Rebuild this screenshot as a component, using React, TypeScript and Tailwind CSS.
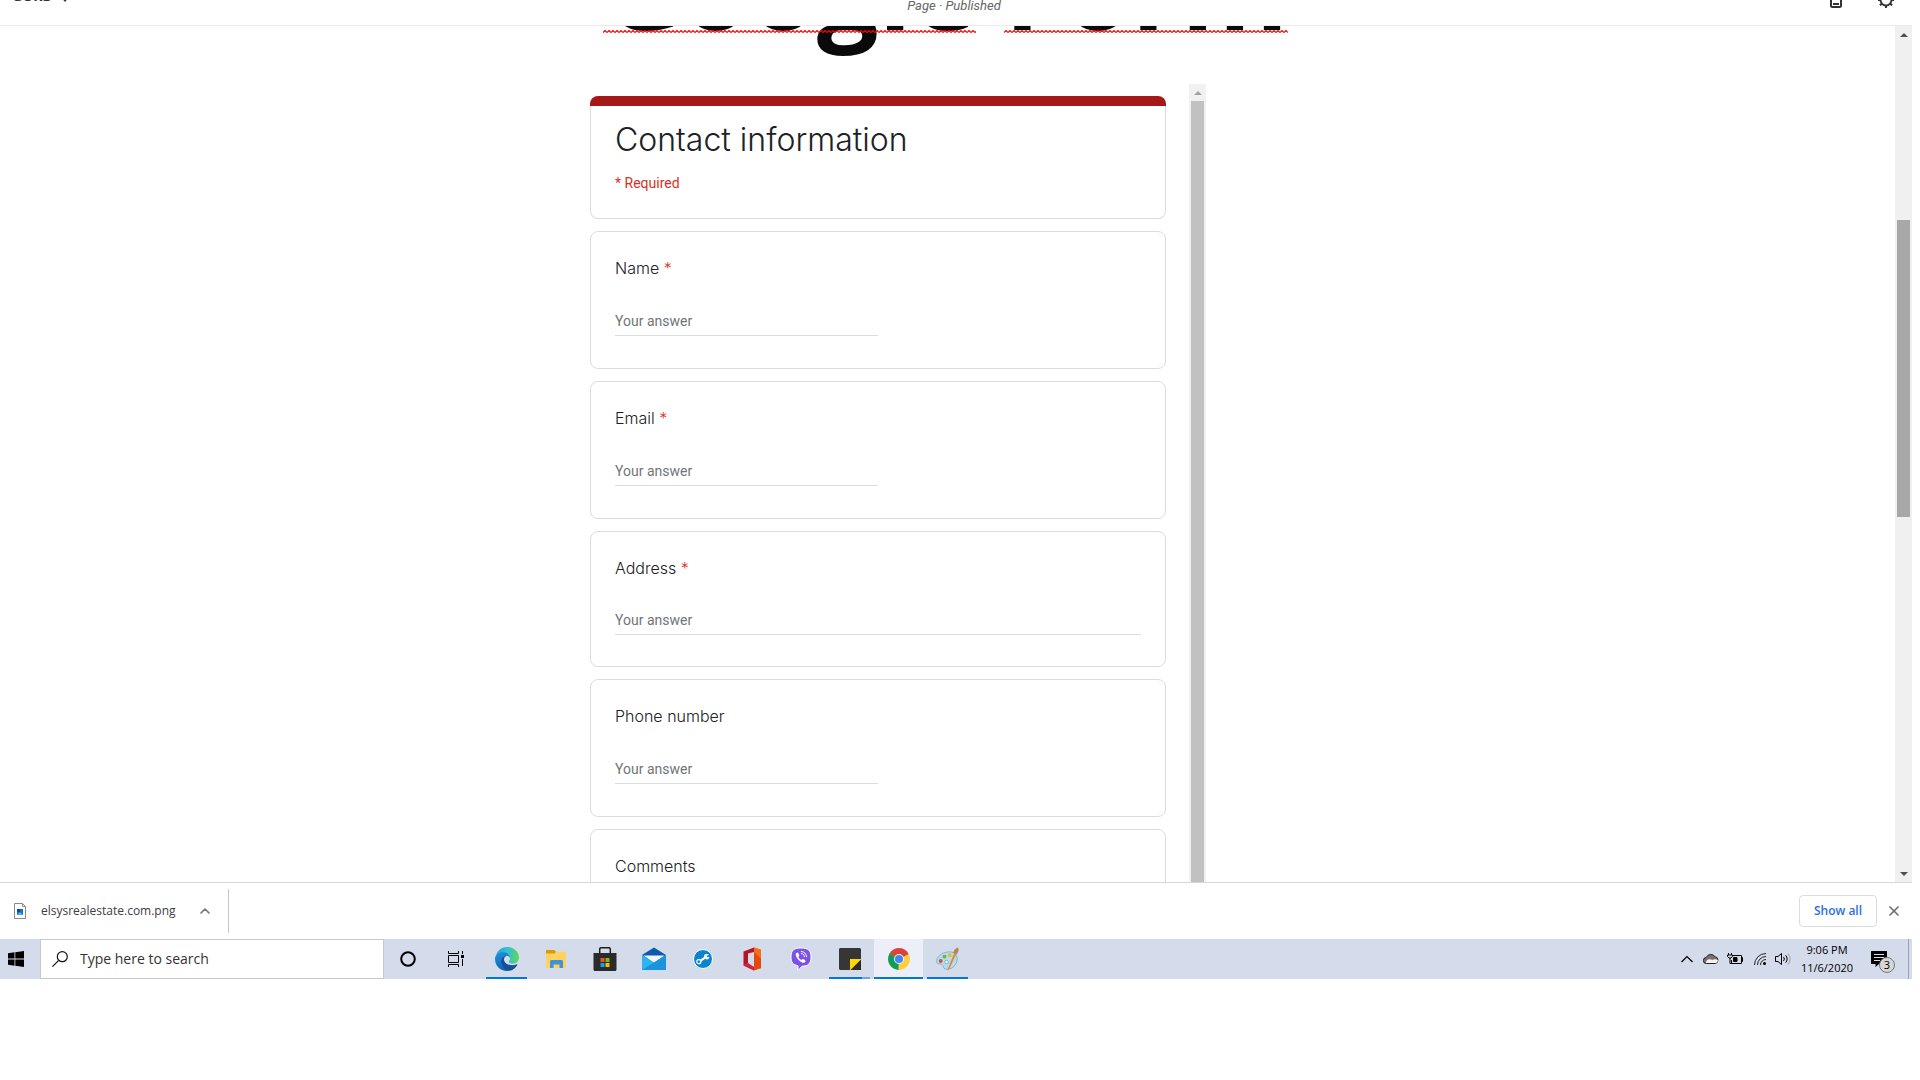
import type { ReactNode } from "react";
import { ChevronUp, X } from "lucide-react";

const questions = [
    { id: "name", label: "Name", required: true },
    { id: "email", label: "Email", required: true },
    { id: "address", label: "Address", required: true, long: true },
    { id: "phone", label: "Phone number" },
    { id: "comments", label: "Comments", long: true },
];

function EdgeIcon() {
    return (
        <svg viewBox="0 0 24 24" className="h-6 w-6">
            <defs>
                <linearGradient id="edgeTop" x1="0" y1="0.4" x2="1" y2="0.4">
                    <stop offset="0" stopColor="#2a9fe0" />
                    <stop offset="0.5" stopColor="#2fc0d8" />
                    <stop offset="1" stopColor="#62d84e" />
                </linearGradient>
                <linearGradient id="edgeLeft" x1="0" y1="0" x2="0.4" y2="1">
                    <stop offset="0" stopColor="#2394dc" />
                    <stop offset="1" stopColor="#0f63b4" />
                </linearGradient>
            </defs>
            <path d="M1 8.500C2.500 3.300 7 0 12 0c7 0 12 5 12 10.600 0 3.800-2.800 6.100-6 6.100-2.700 0-4.200-1-4.200-2 0-.8 1.200-1.200 1.200-3.200C15 8.800 12 6.500 8.500 6.500 5 6.500 2 7.500 1 8.500z" fill="url(#edgeTop)" />
            <path d="M0 12c0-4 3.500-6.700 8-6.700 4.200 0 7 2.700 7 6 0-1.500-1.700-2.600-3.300-2.600C8.500 8.700 6.200 12 6.200 15c0 5 4 8.500 8.200 8.700-.8.200-1.600.3-2.400.3C5.200 24 0 18.600 0 12z" fill="url(#edgeLeft)" />
            <path d="M11.500 8.800C8.200 8.800 6 11.900 6 15.200 6 20 10 23.800 14.300 23.800c3.700-.6 6.500-3 8-5.900.3-.6-.1-.9-.6-.6-1.300.6-2.600.9-4 .9-5 0-8.700-2.600-8.700-5.800 0-1.500 1-2.900 2.500-3.600z" fill="#124f9c" />
        </svg>
    );
}

function ExplorerIcon() {
    return (
        <svg viewBox="0 0 22 20" className="h-5 w-[22px]">
            <path d="M1 1h8.500l1.500 2H21v4H1z" fill="#d99a0b" />
            <path d="M1 4.500h8.500l1.500-1.700h10V19H1z" fill="#ffd25e" />
            <path d="M5 19v-6.500c0-.9.600-1.500 1.500-1.500h10c.9 0 1.500.6 1.500 1.500V19h-3.500v-3.500h-6V19z" fill="#3f93d6" />
        </svg>
    );
}

function StoreIcon() {
    return (
        <svg viewBox="0 0 24 24" className="h-6 w-6">
            <path d="M6.700 7V2.200c0-.9.600-1.500 1.500-1.500h7.600c.9 0 1.500.6 1.500 1.500V7" fill="none" stroke="#1e1e1e" strokeWidth="1.500" />
            <path d="M.5 6h23v16.500c0 .900-.6 1.500-1.500 1.500H2c-.9 0-1.500-.6-1.500-1.500z" fill="#2b2b2b" />
            <path d="M7.500 11h4v4h-4z" fill="#f25022" />
            <path d="M12.500 11h4v4h-4z" fill="#7fba00" />
            <path d="M7.500 16h4v4h-4z" fill="#00a4ef" />
            <path d="M12.500 16h4v4h-4z" fill="#ffb900" />
        </svg>
    );
}

function MailIcon() {
    return (
        <svg viewBox="0 0 24 24" className="h-6 w-6">
            <path d="M0 8 12 .5 24 8l-6 6H6z" fill="#0b5cad" />
            <path d="M1.500 8.500h21L12 16z" fill="#f4f6fa" />
            <path d="M0 8v15h24V8l-12 7.500z" fill="#2cb5f0" />
            <path d="M0 23 24 8v15z" fill="#1c93dd" />
        </svg>
    );
}

function WrenchIcon() {
    return (
        <svg viewBox="0 0 20 20" className="h-5 w-5">
            <circle cx="10" cy="10" r="9.500" fill="#0a84cc" stroke="#fff" />
            <path d="M6.200 12.700 13.500 7.600" stroke="#fff" strokeWidth="2.200" />
            <path d="M16 5.700l-2.300 1.200.2 1.300 2.500-.4a2.700 2.700 0 1 1-3-2.800c1-.2 2 0 2.600.7z" fill="#fff" />
            <circle cx="5.800" cy="12.700" r="2" fill="#0a84cc" stroke="#fff" strokeWidth="1.200" />
        </svg>
    );
}

function OfficeIcon() {
    return (
        <svg viewBox="0 0 20 24" className="h-6 w-5">
            <path d="M12 .5 1.500 4.500v14l4.500-2.300V6.500L12 5z" fill="#b5152a" />
            <path d="M12 .5 19 2.700v18.600l-7 2.200z" fill="#e6480c" />
            <path d="M12 .5 19 2.700v9l-7-6.700z" fill="#f27112" />
            <path d="M1.500 18.500 12 23.500V20z" fill="#e2455c" />
            <path d="M1.500 18.500 6 16l6 4v3.500z" fill="#c9243a" />
        </svg>
    );
}

function ViberIcon() {
    return (
        <svg viewBox="0 0 24 24" className="h-6 w-6">
            <path d="M12 1c7 0 10 2.200 10 9s-3 9.200-9 9.200L9 23.500v-4.800C4 17.800 2 15.500 2 10c0-6.800 3-9 10-9z" fill="#7d52ea" stroke="#fff" />
            <path d="M8.400 5.500c-1.400.5-2 1.500-1.600 2.800 1.100 3.500 3.500 6 6.800 7.400 1.300.5 2.500-.3 2.900-1.500.2-.7-1.800-2.200-2.600-2.200-.6 0-.9 1-1.500.8-1.300-.5-2.400-1.600-2.900-2.900-.2-.6.800-.9.800-1.500 0-.7-1.200-3-1.900-2.900z" fill="#fff" />
            <path d="M12.300 4.500c3 .1 5 2 5.200 5.200M12.500 6.600c1.700.1 2.800 1.200 2.900 3" fill="none" stroke="#fff" strokeLinecap="round" />
        </svg>
    );
}

function StickyNotesIcon() {
    return (
        <svg viewBox="0 0 22 22" className="h-[22px] w-[22px]">
            <path d="M1 0h20l1 1v10L11 22H1l-1-1V1z" fill="#363636" />
            <path d="M11 11h11v.5L11.500 22H11z" fill="#ffd800" />
            <path d="M22 11.500V22H11.500z" fill="#2d2a20" />
        </svg>
    );
}

function ChromeIcon() {
    return (
        <svg viewBox="0 0 24 24" className="h-6 w-6">
            <path d="M12 12 2.500 6.500a11 11 0 0 1 19 0z" fill="#db4437" />
            <path d="M12 12 12 23A11 11 0 0 1 2.500 6.500z" fill="#109d58" />
            <path d="M12 12l9.500-5.500A11 11 0 0 1 12 23z" fill="#ffcd40" />
            <path d="M12 7h9.800L12 12z" fill="#db4437" />
            <path d="M7.700 14.500 2.500 6.500 12 12z" fill="#109d58" />
            <path d="M16.300 14.500 11.300 23 12 12z" fill="#ffcd40" />
            <circle cx="12" cy="12" r="5" fill="#f1f1f1" />
            <circle cx="12" cy="12" r="4" fill="#4285f4" />
        </svg>
    );
}

function PaintIcon() {
    return (
        <svg viewBox="0 0 24 24" className="h-6 w-6">
            <path d="M11.500 5C18 4 22 8 21 13.500S15 23 9.500 22c-3-.6-1.500-3.200-3.500-4.500S1 18 .7 15C.2 10 5.500 5.800 11.500 5z" fill="#b5ddf0" stroke="#6fa9c9" strokeWidth="0.800" />
            <circle cx="4.700" cy="14" r="1.900" fill="#dd4b39" />
            <circle cx="8.500" cy="9.700" r="1.900" fill="#74b72e" />
            <circle cx="13.700" cy="8.200" r="1.900" fill="#f2b90f" />
            <circle cx="10.500" cy="15" r="1.800" fill="#eef6fa" stroke="#6fa9c9" strokeWidth="0.800" />
            <path d="M20 7.500 13 22.500l-1.300.8.100-1.500L18 6.500z" fill="#e08a2a" />
            <path d="M17.200 6C17.500 3.500 19.500 1 22 .5c1.200 1.500.7 4.500-1.500 7z" fill="#b98553" />
        </svg>
    );
}

const pinnedApps: { name: string; icon: ReactNode; state?: "open" | "stacked" | "active" }[] = [
    { name: "Microsoft Edge", icon: <EdgeIcon />, state: "open" },
    { name: "File Explorer", icon: <ExplorerIcon /> },
    { name: "Microsoft Store", icon: <StoreIcon /> },
    { name: "Mail", icon: <MailIcon /> },
    { name: "Support Assistant", icon: <WrenchIcon /> },
    { name: "Office", icon: <OfficeIcon /> },
    { name: "Viber", icon: <ViberIcon /> },
    { name: "Sticky Notes", icon: <StickyNotesIcon />, state: "stacked" },
    { name: "Google Chrome", icon: <ChromeIcon />, state: "active" },
    { name: "Paint", icon: <PaintIcon />, state: "open" },
];

function EditorHeader() {
    return (
        <header className="grid h-[26px] shrink-0 grid-cols-3 content-end items-end border-b border-[#ebebeb] pr-4 pl-3 text-[#333]">
            <button className="flex items-center gap-[6px] pb-[19px] text-left text-sm leading-5 font-bold">
                GORD
                <svg viewBox="0 0 12 12" className="h-3 w-3"><path d="M1 6h10l-5 6z" fill="currentColor" /></svg>
            </button>
            <p className="pb-[11px] text-center font-[Roboto,sans-serif] text-[13px] leading-4 text-[#666] italic">
                Page · Published
            </p>
            <div className="flex items-end justify-end gap-[30px] pb-[15px]">
                <button aria-label="Mobile view">
                    <svg viewBox="0 0 20 20" className="h-5 w-5" fill="none" stroke="currentColor" strokeWidth="2">
                        <rect x="5" y="0" width="10" height="17" rx="1.500" />
                        <path d="M7 14h6" />
                    </svg>
                </button>
                <button aria-label="Settings">
                    <svg viewBox="0 0 20 20" className="h-5 w-5" fill="none" stroke="currentColor" strokeWidth="2">
                        <circle cx="10" cy="10" r="5.500" />
                        <path d="M10 15v3M10 5V2M15 10h3M5 10H2M13.700 13.700l2.500 1.500M6.300 13.700l-2.500 1.500M13.700 6.300l2.500-1.500M6.300 6.300 3.800 4.800" />
                    </svg>
                </button>
            </div>
        </header>
    );
}

function MisspelledWord({ id, children }: { id: string; children: string }) {
    return (
        <span className="relative inline-block">
            {children}
            <svg className="absolute bottom-[10px] left-0 h-[3px] w-full">
                <pattern id={id} width="4" height="3" patternUnits="userSpaceOnUse">
                    <path d="M0 2.500 2 .5 4 2.500" fill="none" stroke="#f00" strokeWidth="1.200" />
                </pattern>
                <rect width="100%" height="3" fill={`url(#${id})`} />
            </svg>
        </span>
    );
}

function FormFrame() {
    return (
        <div className="flex min-h-0 max-w-[616px] flex-1">
            <form className="flex flex-1 flex-col gap-3 pt-3 pr-[23px]">
                <div className="shrink-0">
                    <div className="h-[10px] rounded-t-lg bg-[#a61717]" />
                    <div className="rounded-b-lg border border-t-0 border-[#dadce0] px-6 pt-[14px] pb-[25px]">
                        <h2 className="font-[Inter,sans-serif] text-[32px] leading-10 font-light text-[#202124]">Contact information</h2>
                        <p className="mt-[13px] text-sm leading-5 text-[#d93025]">* Required</p>
                    </div>
                </div>
                {questions.map((q) => (
                    <div
                        key={q.id}
                        className={`shrink-0 rounded-lg border border-[#dadce0] px-6 pt-6 ${q.long ? "pb-[31px]" : "pb-8"}`}
                    >
                        <label htmlFor={q.id} className="block font-[Inter,sans-serif] text-base leading-6 font-light text-[#202124]">
                            {q.label}
                            {q.required && <span className="text-[#d93025]"> *</span>}
                        </label>
                        <input
                            id={q.id}
                            type="text"
                            placeholder="Your answer"
                            className={`block h-[30px] border-b border-[#dadce0] text-sm outline-none placeholder:text-[#70757a] ${q.long ? "mt-[25px] w-full" : "mt-[26px] w-1/2"}`}
                        />
                    </div>
                ))}
            </form>
            <div className="flex w-[17px] flex-col items-center bg-[#f1f1f1]">
                <div className="flex h-[17px] items-center">
                    <svg viewBox="0 0 8 4" className="h-1 w-2"><path d="M4 0l4 4H0z" fill="#a3a3a3" /></svg>
                </div>
                <div className="w-[13px] flex-1 bg-[#c1c1c1]" />
            </div>
        </div>
    );
}

function PageScrollbar() {
    return (
        <div className="flex w-[17px] flex-col items-center bg-[#f0f0f0]">
            <div className="flex h-[17px] items-center">
                <svg viewBox="0 0 8 4" className="h-1 w-2"><path d="M4 0l4 4H0z" fill="#505050" /></svg>
            </div>
            <div className="flex w-[13px] flex-1 flex-col">
                <div className="grow-[177]" />
                <div className="grow-[297] bg-[#a8a8a8]" />
                <div className="grow-[348]" />
            </div>
            <div className="flex h-[17px] items-center">
                <svg viewBox="0 0 8 4" className="h-1 w-2"><path d="M0 0h8L4 4z" fill="#505050" /></svg>
            </div>
        </div>
    );
}

function DownloadShelf() {
    return (
        <div className="flex h-[57px] shrink-0 items-center border-t border-[#d7d7d7] pr-[10px] text-xs">
            <div className="flex h-11 items-center border-r border-[#c6c6c6] pr-[15px] pl-[14px] text-[#3c4043]">
                <svg viewBox="0 0 12 16" className="h-4 w-3">
                    <path d="M.5.500h8L11.500 3.500v12H.5z" fill="#fff" stroke="#8a8a8a" />
                    <path d="M8.500.500v3h3" fill="none" stroke="#8a8a8a" />
                    <path d="M3 6h6v6H3z" fill="#1572c8" />
                    <path d="M3 6h3v3H3z" fill="#0a4a92" />
                    <path d="M3 12l3-3 3 3z" fill="#49b4f2" />
                </svg>
                <a href="#download" className="ml-[15px]">elsysrealestate.com.png</a>
                <button aria-label="Download options" className="ml-[21px]"><ChevronUp className="h-4 w-4 text-[#777]" strokeWidth={2.6} /></button>
            </div>
            <button className="ml-auto h-8 w-[78px] rounded border border-[#dadce0] font-semibold text-[#2a6fe8]">Show all</button>
            <button aria-label="Close downloads" className="ml-[9px]"><X className="h-4 w-4 text-[#707070]" strokeWidth={2.6} /></button>
        </div>
    );
}

function SystemTray() {
    return (
        <div className="ml-auto flex items-center text-black">
            <button aria-label="Show hidden icons">
                <svg viewBox="0 0 12 8" className="h-2 w-3"><path d="M.5 7 6 1.500 11.500 7" fill="none" stroke="#000" strokeWidth="1.200" /></svg>
            </button>
            <svg viewBox="0 0 16 12" className="ml-[10px] h-3 w-4">
                <path d="M3.500 10.500a3 3 0 0 1-.3-6A5 5 0 0 1 12 3.700a3.500 3.500 0 0 1 .5 6.800z" fill="#77736f" stroke="#222" />
                <path d="M3 10c0-2 1-3.500 3-3.800 1.500-.2 2.500.2 3.200.8 2-1.300 4.800-1 5.800.5-.3 1.600-1.300 2.500-2.500 2.500z" fill="#f4f4f4" />
            </svg>
            <svg viewBox="0 0 16 12" className="ml-2 h-3 w-4" fill="none" stroke="#000">
                <path d="M6 2.500h8.500v8h-10V7M14.500 4.500h1v4h-1M1.500 0v2M4.500 0v2M.5 2h5v1.500L4 5H2L.5 3.500zM3 5v5.500h2" />
                <path d="M6.500 4.500H10v4H6.500z" fill="#000" />
            </svg>
            <svg viewBox="0 0 14 14" className="ml-[10px] h-[14px] w-[14px]" fill="none" stroke="#222">
                <path d="M1.500 13A11.500 11.500 0 0 1 13 1.500M4.500 13A8.500 8.500 0 0 1 13 4.500M7.500 13A5.500 5.500 0 0 1 13 7.500" />
                <circle cx="11.500" cy="11.500" r="1.500" fill="#000" stroke="none" />
            </svg>
            <svg viewBox="0 0 17 14" className="ml-2 h-[14px] w-[17px]" fill="none" stroke="#000">
                <path d="M.5 4.500H3L6.500 1.500v11L3 9.500H.5zM8.500 5a3 3 0 0 1 0 4M10.700 3.300a5.500 5.500 0 0 1 0 7.400" />
                <path d="M13 1.500a9 9 0 0 1 0 11" stroke="#9aa0ac" />
            </svg>
            <time className="ml-2 w-[54px] text-center text-[11px] leading-[18px]">
                9:06 PM
                <br />
                11/6/2020
            </time>
            <button aria-label="Notifications" className="relative ml-[17px] h-[18px] w-4">
                <svg viewBox="0 0 16 16" className="h-4 w-4">
                    <path d="M0 0h16v13H8l-3.500 3v-3H0z" fill="#000" />
                    <path d="M3 3.500h10M3 6.500h10M3 9.500h6" stroke="#d4dbea" />
                </svg>
                <span className="absolute top-[7px] left-2 flex h-4 w-4 items-center justify-center rounded-full border border-[#777] bg-[#d6d6d6] text-[11px]">
                    3
                </span>
            </button>
            <div className="ml-[21px] h-10 w-1 border-l border-[#9aa3b5]" />
        </div>
    );
}

function Taskbar() {
    return (
        <footer className="flex h-10 shrink-0 bg-[#d4dbea]">
            <button aria-label="Start" className="w-10 pl-2">
                <svg viewBox="0 0 16 16" className="h-4 w-4" fill="#000">
                    <path d="M0 2.200 6.500 1.300v6.200H0zM7.300 1.200 16 0v7.500H7.300zM0 8.500h6.500v6.200L0 13.800zM7.300 8.500H16V16l-8.700-1.200z" />
                </svg>
            </button>
            <div className="flex w-[344px] items-center border border-[#c8c8c8] bg-white pl-[11px]">
                <svg viewBox="0 0 16 16" className="h-4 w-4" fill="none" stroke="#111" strokeWidth="1.200">
                    <circle cx="10.300" cy="5.700" r="5" />
                    <path d="M6.700 9.300.4 15.600" />
                </svg>
                <input
                    type="search"
                    aria-label="Search"
                    placeholder="Type here to search"
                    className="ml-3 flex-1 text-sm outline-none placeholder:text-[#333]"
                />
            </div>
            <button aria-label="Cortana" className="flex w-12 items-center justify-center">
                <svg viewBox="0 0 16 16" className="h-4 w-4"><circle cx="8" cy="8" r="6.800" fill="none" stroke="#000" strokeWidth="2" /></svg>
            </button>
            <button aria-label="Task view" className="mr-[2px] flex w-12 items-center justify-center">
                <svg viewBox="0 0 16 16" className="h-4 w-4" fill="none" stroke="#000">
                    <path d="M.5 0v2.500h10V0M.5 16v-2.500h10V16M.5 4.500h10v7H.5zM14.500 0v3M14.500 8v7" />
                    <path d="M13 4h3v3h-3z" fill="#000" stroke="none" />
                </svg>
            </button>
            {pinnedApps.map((app) => (
                <button
                    key={app.name}
                    aria-label={app.name}
                    className={`relative flex w-[49px] items-center justify-center ${app.state === "active" ? "bg-[#eceff8]" : ""}`}
                >
                    {app.icon}
                    {app.state && (
                        <span
                            className={`absolute bottom-0 h-[2px] bg-[#0078d7] ${app.state === "active" ? "inset-x-0" : "inset-x-1"} ${app.state === "stacked" ? "border-r-8 border-[#6aa9e4]" : ""}`}
                        />
                    )}
                </button>
            ))}
            <SystemTray />
        </footer>
    );
}

export default function App() {
    return (
        <div className="flex h-screen flex-col overflow-hidden bg-white pr-2 pb-[101px] font-['Open_Sans',sans-serif]">
            <EditorHeader />
            <main className="flex min-h-0 flex-1 overflow-hidden">
                <div className="mx-auto flex w-full max-w-[715px] flex-col font-[Roboto,sans-serif]">
                    <div className="flex h-[58px] shrink-0 items-end pb-[41px] pl-[13px]">
                        <h1 className="font-['Open_Sans',sans-serif] text-[109px] leading-[110px] font-bold whitespace-nowrap text-[#0a0a0a]">
                            <MisspelledWord id="squiggle-first">Google</MisspelledWord>{" "}
                            <MisspelledWord id="squiggle-second">Form</MisspelledWord>
                        </h1>
                    </div>
                    <FormFrame />
                </div>
                <PageScrollbar />
            </main>
            <DownloadShelf />
            <Taskbar />
        </div>
    );
}
